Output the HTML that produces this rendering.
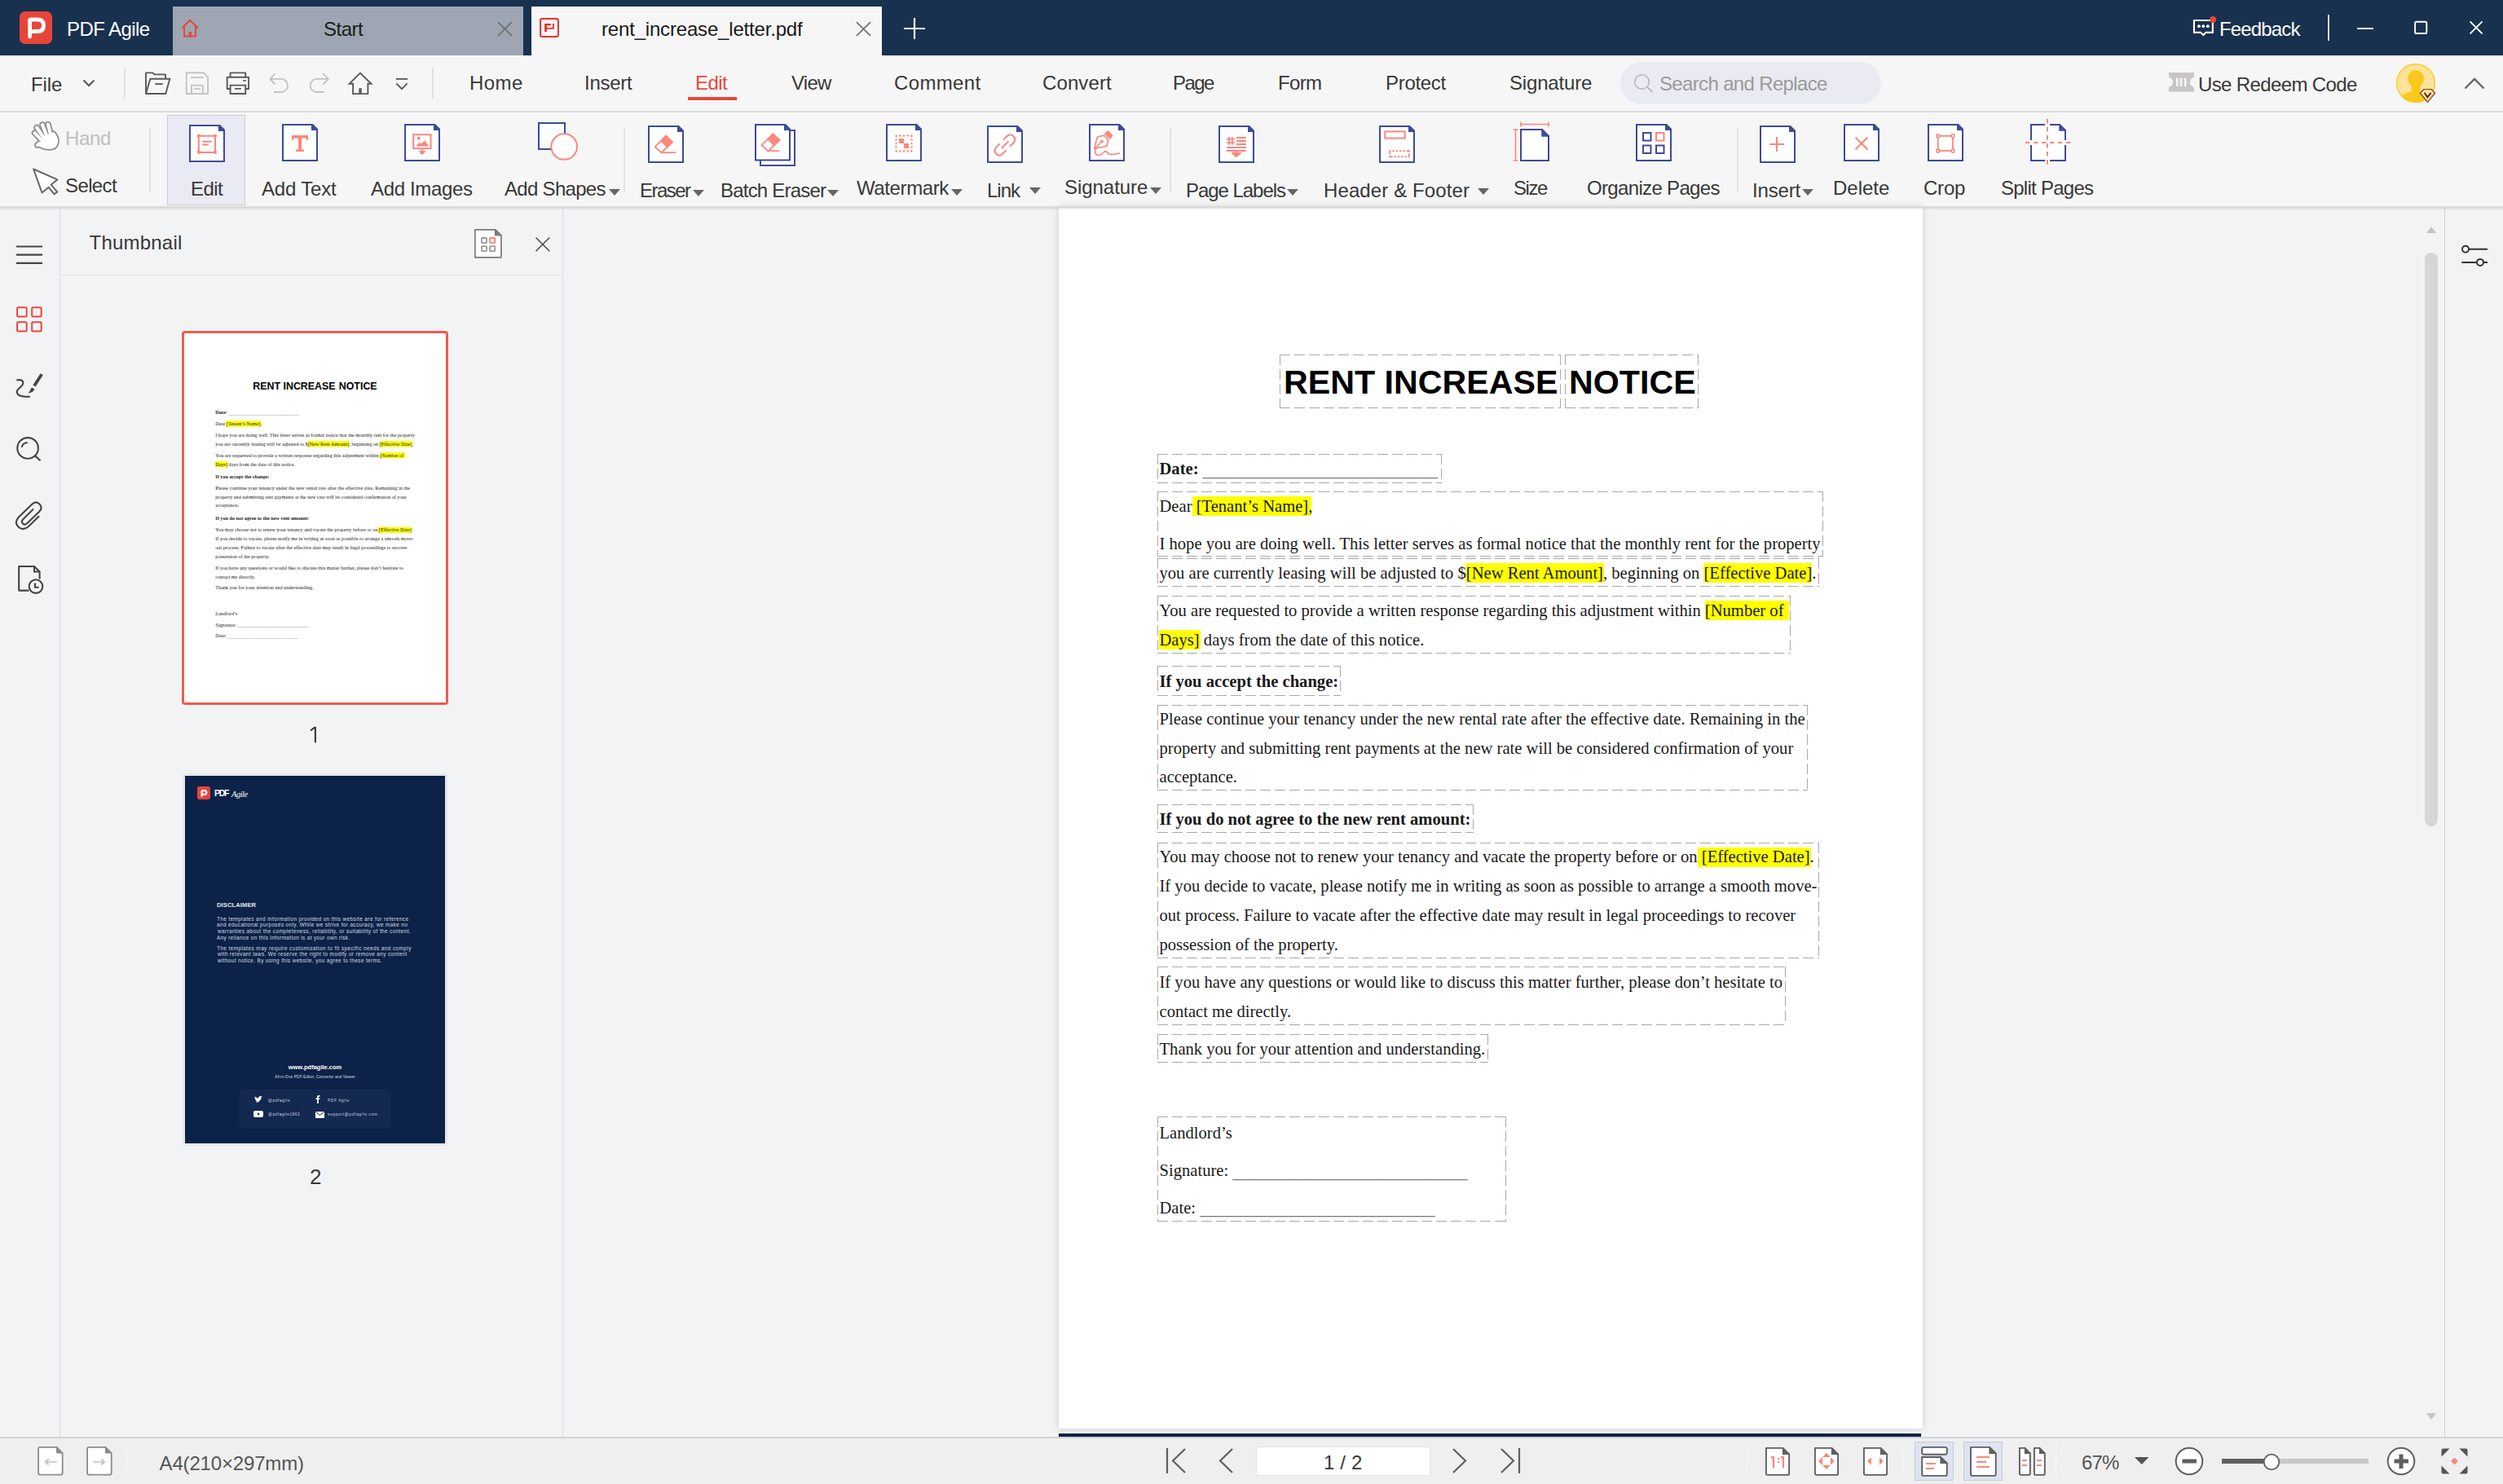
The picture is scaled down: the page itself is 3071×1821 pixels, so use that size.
<!DOCTYPE html><html><head><meta charset="utf-8"><style>
*{margin:0;padding:0}
html,body{width:3071px;height:1821px;overflow:hidden;background:#f2f3f5;font-family:'Liberation Sans',sans-serif}
.t{position:absolute;white-space:pre}
.db{position:absolute;background-image:repeating-linear-gradient(90deg,#a9a9a9 0 13px,transparent 13px 18px),repeating-linear-gradient(90deg,#a9a9a9 0 13px,transparent 13px 18px),repeating-linear-gradient(180deg,#a9a9a9 0 13px,transparent 13px 18px),repeating-linear-gradient(180deg,#a9a9a9 0 13px,transparent 13px 18px);background-size:100% 1px,100% 1px,1px 100%,1px 100%;background-position:0 0,0 100%,0 0,100% 0;background-repeat:no-repeat}
svg{overflow:visible}
</style></head><body><div style="position:absolute;left:0px;top:0px;width:3071px;height:68px;background:#18314f"></div><svg style="position:absolute;left:24px;top:14px;" width="40" height="40" viewBox="0 0 40 40"><rect x="0" y="0" width="40" height="40" rx="7" fill="#e8453a"/><path d="M10.3 31V11Q10.3 7.5 14 7.5H22Q32 7.5 32 17.25Q32 27 22 27H15.5Q15 27 15 27.5V31Q15 33.4 12.65 33.4Q10.3 33.4 10.3 31Z" fill="#fff"/><path d="M15 12.5H22Q27.2 12.5 27.2 17.25Q27.2 22 22 22H17.5Q15.8 22 15 23Z" fill="#e8453a"/></svg><div class="t" style="left:82.00px;top:24px;font-size:24px;line-height:24px;color:#ffffff;font-family:'Liberation Sans';font-weight:400;letter-spacing:-0.586px;">PDF Agile</div><div style="position:absolute;left:212px;top:8px;width:430px;height:60px;background:#9da6b2"></div><svg style="position:absolute;left:221px;top:23px;" width="24" height="23" viewBox="0 0 24 23"><path d="M2 11.5 L12 2 L22 11.5 M5 9 V21.5 H19 V9" fill="none" stroke="#e8453a" stroke-width="2"/><rect x="10.5" y="16" width="3.5" height="5.5" fill="#e8453a"/></svg><div class="t" style="left:397.00px;top:24px;font-size:24px;line-height:24px;color:#1a1a1a;font-family:'Liberation Sans';font-weight:400;letter-spacing:-0.504px;">Start</div><svg style="position:absolute;left:610px;top:26px;" width="19" height="18" viewBox="0 0 19 18"><path d="M1 1.2L18 17.8M18 1.2L1 17.8" stroke="#707070" stroke-width="1.7"/></svg><div style="position:absolute;left:652px;top:8px;width:430px;height:60px;background:#f6f6f6"></div><svg style="position:absolute;left:661px;top:22px;" width="26" height="26" viewBox="0 0 26 26"><rect x="2.1" y="1" width="21.8" height="21.9" rx="2" fill="none" stroke="#e5332a" stroke-width="2"/><path d="M7.1 7H14.9V9.2H9.9V11.9H16.9V7H18.8V13.75H9.9V16.9H7.1Z" fill="#e5332a"/></svg><div class="t" style="left:738.00px;top:24px;font-size:24px;line-height:24px;color:#1a1a1a;font-family:'Liberation Sans';font-weight:400;letter-spacing:-0.181px;">rent_increase_letter.pdf</div><svg style="position:absolute;left:1050px;top:26px;" width="19" height="18" viewBox="0 0 19 18"><path d="M1 1.2L18 17.8M18 1.2L1 17.8" stroke="#707070" stroke-width="1.7"/></svg><svg style="position:absolute;left:1108px;top:21px;" width="28" height="28" viewBox="0 0 28 28"><path d="M14 1V27M1 14H27" stroke="#fff" stroke-width="2.2"/></svg><svg style="position:absolute;left:2690px;top:22px;" width="30" height="24" viewBox="0 0 30 24"><path d="M1.95 3H24.85V17.85H16.5L13.3 21L10.1 17.85H1.95Z" fill="none" stroke="#fff" stroke-width="2.1"/><circle cx="7.9" cy="10.2" r="1.9" fill="#fff"/><circle cx="13.3" cy="10.2" r="1.9" fill="#fff"/><circle cx="18.8" cy="10.2" r="1.9" fill="#fff"/><circle cx="25.1" cy="2" r="3.9" fill="#e8453a"/></svg><div class="t" style="left:2723.00px;top:24px;font-size:24px;line-height:24px;color:#ffffff;font-family:'Liberation Sans';font-weight:400;letter-spacing:-0.843px;">Feedback</div><div style="position:absolute;left:2856px;top:18px;width:2px;height:32px;background:#d8d8d8"></div><div style="position:absolute;left:2892px;top:34px;width:20px;height:2px;background:#fff"></div><svg style="position:absolute;left:2961px;top:25px;" width="18" height="18" viewBox="0 0 18 18"><rect x="2.1" y="1.8" width="14.2" height="14.2" rx="1.6" fill="none" stroke="#fff" stroke-width="1.9"/></svg><svg style="position:absolute;left:3029px;top:25px;" width="18" height="18" viewBox="0 0 18 18"><path d="M1.6 1.4L16.6 16.4M16.6 1.4L1.6 16.4" stroke="#fff" stroke-width="1.9"/></svg><div style="position:absolute;left:0px;top:68px;width:3071px;height:69px;background:#f6f6f6"></div><div style="position:absolute;left:0px;top:136px;width:3071px;height:2px;background:#dadada"></div><div class="t" style="left:38.00px;top:92px;font-size:24px;line-height:24px;color:#383838;font-family:'Liberation Sans';font-weight:400;letter-spacing:-0.108px;">File</div><svg style="position:absolute;left:101px;top:97px;" width="16" height="10" viewBox="0 0 16 10"><path d="M1.5 1.5L8 8L14.5 1.5" fill="none" stroke="#555" stroke-width="2"/></svg><div style="position:absolute;left:152px;top:83px;width:2px;height:38px;background:#e0e0e0"></div><svg style="position:absolute;left:176px;top:88px;" width="34" height="30" viewBox="0 0 34 30"><path d="M3 27V1.4H11.4L13.8 3.4H27V8.5" fill="none" stroke="#595959" stroke-width="1.9" stroke-linejoin="round"/><path d="M3 27L8.4 8.8H32.3L27.3 27Z" fill="none" stroke="#595959" stroke-width="1.9" stroke-linejoin="round"/><path d="M14.4 15H23.7" stroke="#595959" stroke-width="1.9"/></svg><svg style="position:absolute;left:227px;top:88px;" width="30" height="30" viewBox="0 0 30 30"><path d="M1.7 1.2H22.7L28.1 6.6V27H1.7Z" fill="none" stroke="#c4c4c4" stroke-width="1.9" stroke-linejoin="round"/><path d="M7.1 7H22.7" stroke="#c4c4c4" stroke-width="1.9"/><path d="M8 27V16.6H21.8V27" fill="none" stroke="#c4c4c4" stroke-width="1.9"/><path d="M11.3 21H18.8" stroke="#c4c4c4" stroke-width="1.9"/></svg><svg style="position:absolute;left:277px;top:88px;" width="30" height="30" viewBox="0 0 30 30"><path d="M5.6 6.7V1.4H24.2V6.7" fill="none" stroke="#595959" stroke-width="1.9" stroke-linejoin="round"/><path d="M5.6 21H1.7V6.7H28.1V21H24.2" fill="none" stroke="#595959" stroke-width="1.9" stroke-linejoin="round"/><path d="M5.6 16.6H24.2V27H5.6Z" fill="none" stroke="#595959" stroke-width="1.9"/><path d="M21.2 10.9H24.8M11 20.9H18.8" stroke="#595959" stroke-width="1.9"/></svg><svg style="position:absolute;left:330px;top:89px;" width="26" height="26" viewBox="0 0 26 26"><path d="M7.5 1.3L1.4 7.9L7.5 14.5M1.4 7.9H15A8 8 0 0 1 15 24H6.1" fill="none" stroke="#c4c4c4" stroke-width="1.9"/></svg><svg style="position:absolute;left:379px;top:89px;" width="26" height="26" viewBox="0 0 26 26"><path d="M17.3 1.3L23.8 7.9L17.3 14.5M23.8 7.9H9.7A8 8 0 0 0 9.7 24H18.8" fill="none" stroke="#c4c4c4" stroke-width="1.9"/></svg><svg style="position:absolute;left:427px;top:88px;" width="32" height="30" viewBox="0 0 32 30"><path d="M14.9 1.6L1.6 14.8H6.1V27.1H24.4V14.8H28.5Z" fill="none" stroke="#595959" stroke-width="1.9" stroke-linejoin="miter"/><rect x="13.3" y="20.2" width="3.5" height="6.5" fill="#595959"/></svg><svg style="position:absolute;left:484px;top:95px;" width="17" height="18" viewBox="0 0 17 18"><path d="M1.9 1.9H16" stroke="#595959" stroke-width="1.9"/><path d="M2.3 7.4L9 14.2L15.6 7.4" fill="none" stroke="#595959" stroke-width="1.9"/></svg><div style="position:absolute;left:530px;top:83px;width:2px;height:38px;background:#e0e0e0"></div><div class="t" style="left:576.00px;top:90px;font-size:24px;line-height:24px;color:#383838;font-family:'Liberation Sans';font-weight:400;letter-spacing:0.443px;">Home</div><div class="t" style="left:717.00px;top:90px;font-size:24px;line-height:24px;color:#383838;font-family:'Liberation Sans';font-weight:400;letter-spacing:-0.271px;">Insert</div><div class="t" style="left:853.00px;top:90px;font-size:24px;line-height:24px;color:#e8483e;font-family:'Liberation Sans';font-weight:400;letter-spacing:-0.562px;">Edit</div><div class="t" style="left:971.00px;top:90px;font-size:24px;line-height:24px;color:#383838;font-family:'Liberation Sans';font-weight:400;letter-spacing:-0.751px;">View</div><div class="t" style="left:1097.00px;top:90px;font-size:24px;line-height:24px;color:#383838;font-family:'Liberation Sans';font-weight:400;letter-spacing:0.357px;">Comment</div><div class="t" style="left:1279.00px;top:90px;font-size:24px;line-height:24px;color:#383838;font-family:'Liberation Sans';font-weight:400;letter-spacing:0.105px;">Convert</div><div class="t" style="left:1439.00px;top:90px;font-size:24px;line-height:24px;color:#383838;font-family:'Liberation Sans';font-weight:400;letter-spacing:-1.568px;">Page</div><div class="t" style="left:1568.00px;top:90px;font-size:24px;line-height:24px;color:#383838;font-family:'Liberation Sans';font-weight:400;letter-spacing:-0.667px;">Form</div><div class="t" style="left:1700.00px;top:90px;font-size:24px;line-height:24px;color:#383838;font-family:'Liberation Sans';font-weight:400;letter-spacing:-0.311px;">Protect</div><div class="t" style="left:1852.00px;top:90px;font-size:24px;line-height:24px;color:#383838;font-family:'Liberation Sans';font-weight:400;letter-spacing:-0.174px;">Signature</div><div style="position:absolute;left:844px;top:119px;width:60px;height:4px;background:#e8483e"></div><div style="position:absolute;left:1988px;top:76px;width:320px;height:52px;background:#e9eaf2;border-radius:26px"></div><svg style="position:absolute;left:2004px;top:90px;" width="25" height="25" viewBox="0 0 25 25"><circle cx="10.5" cy="10.5" r="8.8" fill="none" stroke="#b9b5b5" stroke-width="1.6"/><path d="M17.3 17L23.4 23.1" stroke="#b9b5b5" stroke-width="1.7"/></svg><div class="t" style="left:2036.00px;top:91px;font-size:24px;line-height:24px;color:#9a9a9a;font-family:'Liberation Sans';font-weight:400;letter-spacing:-0.655px;">Search and Replace</div><svg style="position:absolute;left:2661px;top:89px;" width="31" height="24" viewBox="0 0 31 24"><path d="M0 0H31V5.5Q25.8 7.5 25.8 11.8Q25.8 16 31 18.2V23.6H0V18.2Q5.2 16 5.2 11.8Q5.2 7.5 0 5.5Z" fill="#c8c5c5"/><path d="M10.25 6.7V16.9M15.05 6.7V16.9M20.25 6.7V16.9" stroke="#f6f6f6" stroke-width="2.7"/></svg><div class="t" style="left:2697.00px;top:92px;font-size:24px;line-height:24px;color:#383838;font-family:'Liberation Sans';font-weight:400;letter-spacing:-0.626px;">Use Redeem Code</div><svg style="position:absolute;left:2938px;top:76px;" width="54" height="54" viewBox="0 0 54 54"><circle cx="26" cy="26" r="24" fill="#fde39a"/><circle cx="26" cy="26" r="23.3" fill="none" stroke="#f8cd2a" stroke-width="1.4"/><clipPath id="avc"><circle cx="26" cy="26" r="24"/></clipPath><g clip-path="url(#avc)"><ellipse cx="26" cy="20.5" rx="9.9" ry="10.5" fill="#f8c81c"/><path d="M6 52L9.5 40.8L20.7 35.8V28H31.4V35.8L45 41V52Z" fill="#f8c81c"/></g><path d="M35.8 33.6H45.2L49.6 38.2L40.4 49.4L31.4 38.2Z" fill="#fde39a" stroke="#8a4b22" stroke-width="1.4" stroke-linejoin="round"/><path d="M36.6 37.8L40.4 43.3L44.6 37.8" fill="none" stroke="#5a2418" stroke-width="1.9"/></svg><svg style="position:absolute;left:3023px;top:95px;" width="26" height="15" viewBox="0 0 26 15"><path d="M1.5 13.5L13 2L24.5 13.5" fill="none" stroke="#666" stroke-width="2.4"/></svg><div style="position:absolute;left:0px;top:138px;width:3071px;height:116px;background:#f6f6f6"></div><div style="position:absolute;left:0px;top:253px;width:3071px;height:2px;background:#dcdcdc"></div><svg style="position:absolute;left:38px;top:148px;" width="40" height="40" viewBox="0 0 40 40"><path d="M12 23L4.5 15" stroke="#8f8f8f" stroke-width="7.6" stroke-linecap="round"/><path d="M15 20L7 8.5" stroke="#8f8f8f" stroke-width="7.6" stroke-linecap="round"/><path d="M19 18L14 5" stroke="#8f8f8f" stroke-width="7.6" stroke-linecap="round"/><path d="M24 17L21 4.5" stroke="#8f8f8f" stroke-width="7.6" stroke-linecap="round"/><path d="M17 29L8 30" stroke="#8f8f8f" stroke-width="7.6" stroke-linecap="round"/><path d="M9 30.5Q6 31.5 6.5 29Q8 26 13 25L13 20L28 14Q34 20 33 27Q31 35 23 35Q15 35 9 30.5Z" fill="#8f8f8f" stroke="#8f8f8f" stroke-width="3.6" stroke-linejoin="round"/><path d="M12 23L4.5 15" stroke="#fff" stroke-width="4" stroke-linecap="round"/><path d="M15 20L7 8.5" stroke="#fff" stroke-width="4" stroke-linecap="round"/><path d="M19 18L14 5" stroke="#fff" stroke-width="4" stroke-linecap="round"/><path d="M24 17L21 4.5" stroke="#fff" stroke-width="4" stroke-linecap="round"/><path d="M17 29L8 30" stroke="#fff" stroke-width="4" stroke-linecap="round"/><path d="M9 30.5Q6 31.5 6.5 29Q8 26 13 25L13 20L28 14Q34 20 33 27Q31 35 23 35Q15 35 9 30.5Z" fill="#fff" stroke="#fff" stroke-width="0" /></svg><div class="t" style="left:80.00px;top:158px;font-size:24px;line-height:24px;color:#c0c0c0;font-family:'Liberation Sans';font-weight:400;letter-spacing:-0.342px;">Hand</div><svg style="position:absolute;left:39px;top:205px;" width="36" height="36" viewBox="0 0 36 36"><path d="M2.1 2.5L31.4 15.4L23.6 21.7L31.4 30.6L27.3 33.2L20.6 24.7L12.5 31.4Z" fill="#fff" stroke="#666" stroke-width="2" stroke-linejoin="round"/></svg><div class="t" style="left:80.00px;top:216px;font-size:24px;line-height:24px;color:#383838;font-family:'Liberation Sans';font-weight:400;letter-spacing:-0.607px;">Select</div><div style="position:absolute;left:183px;top:156px;width:2px;height:80px;background:#e3e3e3"></div><div style="position:absolute;left:205px;top:141px;width:96px;height:111px;background:#e9eaf3;border:1px solid #c9cdd8;box-sizing:border-box"></div><svg style="position:absolute;left:232px;top:153px;" width="44" height="46" viewBox="0 0 44 46"><path d="M1 1H37.5 L43 6.5 V45 H1Z" fill="#fff" stroke="#3f4b96" stroke-width="2" stroke-linejoin="miter"/><path d="M36 1H37.5L43 6.5V8H36Z" fill="#3f4b96"/><path d="M11.8 13.7H32M11.8 33.9H32M11.8 13.7V33.9M32 13.7V33.9" stroke="#fb877d" stroke-width="2" fill="none"/><rect x="10.0" y="11.899999999999999" width="3.6" height="3.6" fill="#fb877d"/><rect x="30.2" y="11.899999999999999" width="3.6" height="3.6" fill="#fb877d"/><rect x="10.0" y="32.1" width="3.6" height="3.6" fill="#fb877d"/><rect x="30.2" y="32.1" width="3.6" height="3.6" fill="#fb877d"/><path d="M16.3 20.7H28M16.3 24.6H23.6" stroke="#fb877d" stroke-width="2"/></svg><div class="t" style="left:234.00px;top:220px;font-size:24px;line-height:24px;color:#383838;font-family:'Liberation Sans';font-weight:400;letter-spacing:-0.562px;">Edit</div><svg style="position:absolute;left:346px;top:152px;" width="44" height="46" viewBox="0 0 44 46"><path d="M1 1H37.5 L43 6.5 V45 H1Z" fill="#fff" stroke="#3f4b96" stroke-width="2" stroke-linejoin="miter"/><path d="M36 1H37.5L43 6.5V8H36Z" fill="#3f4b96"/><path d="M12 14H32V20H30V17.5H24V31.5H27V34H17V31.5H20V17.5H14V20H12Z" fill="#fb877d"/></svg><div class="t" style="left:321.00px;top:220px;font-size:24px;line-height:24px;color:#383838;font-family:'Liberation Sans';font-weight:400;letter-spacing:-0.174px;">Add Text</div><svg style="position:absolute;left:496px;top:152px;" width="44" height="46" viewBox="0 0 44 46"><path d="M1 1H37.5 L43 6.5 V45 H1Z" fill="#fff" stroke="#3f4b96" stroke-width="2" stroke-linejoin="miter"/><path d="M36 1H37.5L43 6.5V8H36Z" fill="#3f4b96"/><rect x="11.2" y="13.2" width="21.3" height="17" fill="none" stroke="#fb877d" stroke-width="2"/><circle cx="17.7" cy="17.7" r="2" fill="#fb877d"/><path d="M14.2 27.6L18.7 22.7L20.5 24.5L25.6 20.3L29.9 27.6Z" fill="#fb877d"/><path d="M21 30.2H23V33.3H21Z M17 33.3H27L22 38Z" fill="#fb877d"/></svg><div class="t" style="left:455.00px;top:220px;font-size:24px;line-height:24px;color:#383838;font-family:'Liberation Sans';font-weight:400;letter-spacing:-0.342px;">Add Images</div><svg style="position:absolute;left:660px;top:150px;" width="52" height="50" viewBox="0 0 52 50"><rect x="1" y="1" width="32" height="32" fill="#fff" stroke="#3f4b96" stroke-width="2"/><circle cx="32.2" cy="30" r="15.8" fill="#fff" stroke="#fb877d" stroke-width="2"/></svg><div class="t" style="left:619.00px;top:220px;font-size:24px;line-height:24px;color:#383838;font-family:'Liberation Sans';font-weight:400;letter-spacing:-0.697px;">Add Shapes</div><svg style="position:absolute;left:747px;top:232px;" width="14" height="8" viewBox="0 0 14 8"><path d="M0 0H14L7.0 8Z" fill="#666"/></svg><div style="position:absolute;left:765px;top:157px;width:2px;height:79px;background:#e3e3e3"></div><svg style="position:absolute;left:795px;top:154px;" width="44" height="46" viewBox="0 0 44 46"><path d="M1 1H37.5 L43 6.5 V45 H1Z" fill="#fff" stroke="#3f4b96" stroke-width="2" stroke-linejoin="miter"/><path d="M36 1H37.5L43 6.5V8H36Z" fill="#3f4b96"/><path d="M8.7 26.2L22.1 12.6L30.2 20.5L16.6 33.2Z" fill="none" stroke="#fb877d" stroke-width="1.8" stroke-linejoin="miter"/><path d="M15.3 19.6L22.1 12.6L30.2 20.5L23.3 27Z" fill="#fb877d"/><path d="M16 33.2H34" stroke="#fb877d" stroke-width="1.8"/></svg><div class="t" style="left:785.00px;top:222px;font-size:24px;line-height:24px;color:#383838;font-family:'Liberation Sans';font-weight:400;letter-spacing:-1.539px;">Eraser</div><svg style="position:absolute;left:850px;top:233px;" width="14" height="8" viewBox="0 0 14 8"><path d="M0 0H14L7.0 8Z" fill="#666"/></svg><svg style="position:absolute;left:926px;top:152px;" width="51" height="53" viewBox="0 0 51 53"><path d="M7 44.5V51H49V8H43" fill="#fff" stroke="#3f4b96" stroke-width="2"/><path d="M1 1H37.5L43 6.5V44.5H1Z" fill="#fff" stroke="#3f4b96" stroke-width="2"/><path d="M36 1H37.5L43 6.5V8H36Z" fill="#3f4b96"/><path d="M8.6 26.1L22.3 12.2L30.6 20L16.4 33.4Z" fill="none" stroke="#fb877d" stroke-width="1.8"/><path d="M15.4 19.2L22.3 12.2L30.6 20L23.4 26.9Z" fill="#fb877d"/><path d="M16 33.2H30.2" stroke="#fb877d" stroke-width="1.8"/></svg><div class="t" style="left:884.00px;top:222px;font-size:24px;line-height:24px;color:#383838;font-family:'Liberation Sans';font-weight:400;letter-spacing:-0.794px;">Batch Eraser</div><svg style="position:absolute;left:1015px;top:233px;" width="14" height="8" viewBox="0 0 14 8"><path d="M0 0H14L7.0 8Z" fill="#666"/></svg><svg style="position:absolute;left:1087px;top:152px;" width="44" height="46" viewBox="0 0 44 46"><path d="M1 1H37.5 L43 6.5 V45 H1Z" fill="#fff" stroke="#3f4b96" stroke-width="2" stroke-linejoin="miter"/><path d="M36 1H37.5L43 6.5V8H36Z" fill="#3f4b96"/><path d="M11.5 14.5H32.5M31.5 13.5V34.5M32.5 33.5H11.5M12.5 34.5V13.5" fill="none" stroke="#fb877d" stroke-width="2" stroke-dasharray="2.4 2.25"/><rect x="16" y="18" width="6" height="6" fill="#fb877d"/><rect x="22" y="24" width="6" height="6" fill="#fb877d"/></svg><div class="t" style="left:1051.00px;top:219px;font-size:24px;line-height:24px;color:#383838;font-family:'Liberation Sans';font-weight:400;letter-spacing:-0.394px;">Watermark</div><svg style="position:absolute;left:1167px;top:232px;" width="14" height="8" viewBox="0 0 14 8"><path d="M0 0H14L7.0 8Z" fill="#666"/></svg><svg style="position:absolute;left:1211px;top:154px;" width="44" height="46" viewBox="0 0 44 46"><path d="M1 1H37.5 L43 6.5 V45 H1Z" fill="#fff" stroke="#3f4b96" stroke-width="2" stroke-linejoin="miter"/><path d="M36 1H37.5L43 6.5V8H36Z" fill="#3f4b96"/><path d="M19.9 17.6L24.3 13.2Q28.5 9.2 32.6 13.2Q36.5 17.4 32.3 21.5L27.8 25.9M15.6 22.3L11.3 26.6Q7.3 30.8 11.3 34.8Q15.4 38.8 19.5 34.4L23.5 30.2M17.7 28L26.4 19.4" fill="none" stroke="#fb877d" stroke-width="2"/></svg><div class="t" style="left:1211.00px;top:222px;font-size:24px;line-height:24px;color:#383838;font-family:'Liberation Sans';font-weight:400;letter-spacing:-1.009px;">Link</div><svg style="position:absolute;left:1263px;top:230px;" width="14" height="8" viewBox="0 0 14 8"><path d="M0 0H14L7.0 8Z" fill="#666"/></svg><svg style="position:absolute;left:1336px;top:152px;" width="44" height="46" viewBox="0 0 44 46"><path d="M1 1H37.5 L43 6.5 V45 H1Z" fill="#fff" stroke="#3f4b96" stroke-width="2" stroke-linejoin="miter"/><path d="M36 1H37.5L43 6.5V8H36Z" fill="#3f4b96"/><path d="M6.7 30.4L10.3 16L19.3 14.2L23.6 20.3L21.8 27.5Z" fill="none" stroke="#fb877d" stroke-width="1.7" stroke-linejoin="round"/><path d="M18.9 11.7L23.6 8.1L29.7 14.2L25.8 19.2Z" fill="#fb877d"/><path d="M8.5 29.3L15.7 21.8" stroke="#fb877d" stroke-width="1.5"/><circle cx="16" cy="21.6" r="1.9" fill="#fb877d"/><path d="M7.8 30.4Q6.5 38.5 11.7 38.5Q14.5 38.5 18.6 34.5Q20.5 32.8 22.5 35Q24.5 37.8 29 37.5L37.3 36.1" fill="none" stroke="#fb877d" stroke-width="1.7" stroke-linecap="round"/></svg><div class="t" style="left:1306.00px;top:218px;font-size:24px;line-height:24px;color:#383838;font-family:'Liberation Sans';font-weight:400;letter-spacing:-0.049px;">Signature</div><svg style="position:absolute;left:1411px;top:230px;" width="14" height="8" viewBox="0 0 14 8"><path d="M0 0H14L7.0 8Z" fill="#666"/></svg><div style="position:absolute;left:1435px;top:156px;width:2px;height:80px;background:#e3e3e3"></div><svg style="position:absolute;left:1495px;top:154px;" width="44" height="46" viewBox="0 0 44 46"><path d="M1 1H37.5 L43 6.5 V45 H1Z" fill="#fff" stroke="#3f4b96" stroke-width="2" stroke-linejoin="miter"/><path d="M36 1H37.5L43 6.5V8H36Z" fill="#3f4b96"/><path d="M13 14.1V23.7M17 14.1V23.7M10 16.7H20.1M10 21.2H20.1" stroke="#fb877d" stroke-width="1.7"/><path d="M22 15H33.9M22 19H33.9M22 23H33.9M10 27H33.9M10 31H33.9" stroke="#fb877d" stroke-width="1.8"/><path d="M21.9 31V34M16.5 33.6H27.4L21.9 38.3Z" fill="#fb877d" stroke="#fb877d" stroke-width="1.5" stroke-linejoin="round"/></svg><div class="t" style="left:1455.00px;top:222px;font-size:24px;line-height:24px;color:#383838;font-family:'Liberation Sans';font-weight:400;letter-spacing:-1.044px;">Page Labels</div><svg style="position:absolute;left:1579px;top:232px;" width="14" height="8" viewBox="0 0 14 8"><path d="M0 0H14L7.0 8Z" fill="#666"/></svg><svg style="position:absolute;left:1692px;top:154px;" width="44" height="46" viewBox="0 0 44 46"><path d="M1 1H37.5 L43 6.5 V45 H1Z" fill="#fff" stroke="#3f4b96" stroke-width="2" stroke-linejoin="miter"/><path d="M36 1H37.5L43 6.5V8H36Z" fill="#3f4b96"/><rect x="7.3" y="7.4" width="24.4" height="8.2" fill="none" stroke="#fb877d" stroke-width="2"/><path d="M12.2 31.3H37.9M36.9 30.3V39.3M37.9 38.3H12.2M13.2 39.3V30.3" fill="none" stroke="#fb877d" stroke-width="2" stroke-dasharray="2.3 2"/></svg><div class="t" style="left:1624.00px;top:222px;font-size:24px;line-height:24px;color:#383838;font-family:'Liberation Sans';font-weight:400;letter-spacing:0.112px;">Header &amp; Footer</div><svg style="position:absolute;left:1813px;top:231px;" width="14" height="8" viewBox="0 0 14 8"><path d="M0 0H14L7.0 8Z" fill="#666"/></svg><svg style="position:absolute;left:1856px;top:149px;" width="50" height="52" viewBox="0 0 50 52"><path d="M10 10H36L44 18V48H10Z" fill="#fff" stroke="#3f4b96" stroke-width="2"/><path d="M36 10L44 18H36Z" fill="#3f4b96" stroke="#3f4b96" stroke-width="1.5" stroke-linejoin="round"/><path d="M10 3.5H44M10 0.5V6.5M44 0.5V6.5" stroke="#fb877d" stroke-width="1.6"/><path d="M3.5 10V48M0.5 10H6.5M0.5 48H6.5" stroke="#fb877d" stroke-width="1.6"/></svg><div class="t" style="left:1857.00px;top:219px;font-size:24px;line-height:24px;color:#383838;font-family:'Liberation Sans';font-weight:400;letter-spacing:-1.447px;">Size</div><svg style="position:absolute;left:2007px;top:152px;" width="44" height="46" viewBox="0 0 44 46"><path d="M1 1H37.5 L43 6.5 V45 H1Z" fill="#fff" stroke="#3f4b96" stroke-width="2" stroke-linejoin="miter"/><path d="M36 1H37.5L43 6.5V8H36Z" fill="#3f4b96"/><rect x="9" y="11" width="9.5" height="9.5" fill="none" stroke="#3f4b96" stroke-width="2"/><rect x="25" y="11" width="9.5" height="9.5" fill="none" stroke="#fb877d" stroke-width="2"/><rect x="9" y="26.5" width="9.5" height="9.5" fill="none" stroke="#3f4b96" stroke-width="2"/><rect x="25" y="26.5" width="9.5" height="9.5" fill="none" stroke="#3f4b96" stroke-width="2"/></svg><div class="t" style="left:1947.00px;top:219px;font-size:24px;line-height:24px;color:#383838;font-family:'Liberation Sans';font-weight:400;letter-spacing:-0.662px;">Organize Pages</div><div style="position:absolute;left:2131px;top:156px;width:2px;height:80px;background:#e3e3e3"></div><svg style="position:absolute;left:2159px;top:154px;" width="44" height="46" viewBox="0 0 44 46"><path d="M1 1H37.5 L43 6.5 V45 H1Z" fill="#fff" stroke="#3f4b96" stroke-width="2" stroke-linejoin="miter"/><path d="M36 1H37.5L43 6.5V8H36Z" fill="#3f4b96"/><path d="M21 14V32M12 23H30" stroke="#fb877d" stroke-width="2"/></svg><div class="t" style="left:2150.00px;top:222px;font-size:24px;line-height:24px;color:#383838;font-family:'Liberation Sans';font-weight:400;letter-spacing:-0.171px;">Insert</div><svg style="position:absolute;left:2211px;top:232px;" width="14" height="8" viewBox="0 0 14 8"><path d="M0 0H14L7.0 8Z" fill="#666"/></svg><svg style="position:absolute;left:2262px;top:152px;" width="44" height="46" viewBox="0 0 44 46"><path d="M1 1H37.5 L43 6.5 V45 H1Z" fill="#fff" stroke="#3f4b96" stroke-width="2" stroke-linejoin="miter"/><path d="M36 1H37.5L43 6.5V8H36Z" fill="#3f4b96"/><path d="M14.5 16.5L29.5 31.5M29.5 16.5L14.5 31.5" stroke="#fb877d" stroke-width="2"/></svg><div class="t" style="left:2249.00px;top:219px;font-size:24px;line-height:24px;color:#383838;font-family:'Liberation Sans';font-weight:400;letter-spacing:-0.005px;">Delete</div><svg style="position:absolute;left:2365px;top:152px;" width="44" height="46" viewBox="0 0 44 46"><path d="M1 1H37.5 L43 6.5 V45 H1Z" fill="#fff" stroke="#3f4b96" stroke-width="2" stroke-linejoin="miter"/><path d="M36 1H37.5L43 6.5V8H36Z" fill="#3f4b96"/><rect x="12.8" y="14.8" width="18.2" height="18.3" fill="none" stroke="#fb877d" stroke-width="1.8"/><circle cx="12.8" cy="14.8" r="2" fill="#fff" stroke="#fb877d" stroke-width="1.6"/><circle cx="31" cy="14.8" r="2" fill="#fff" stroke="#fb877d" stroke-width="1.6"/><circle cx="12.8" cy="33.1" r="2" fill="#fff" stroke="#fb877d" stroke-width="1.6"/><circle cx="31" cy="33.1" r="2" fill="#fff" stroke="#fb877d" stroke-width="1.6"/></svg><div class="t" style="left:2360.00px;top:219px;font-size:24px;line-height:24px;color:#383838;font-family:'Liberation Sans';font-weight:400;letter-spacing:-0.224px;">Crop</div><svg style="position:absolute;left:2484px;top:145px;" width="58" height="58" viewBox="0 0 58 58"><path d="M8 8H43L50 15V52H8Z" fill="#fff" stroke="#3f4b96" stroke-width="2"/><path d="M43 8L50 15H43Z" fill="#3f4b96" stroke="#3f4b96" stroke-width="1.5" stroke-linejoin="round"/><rect x="25" y="5" width="6" height="6" fill="#fff"/><rect x="25" y="49" width="6" height="6" fill="#fff"/><rect x="5" y="27" width="6" height="6" fill="#fff"/><rect x="47" y="27" width="6" height="6" fill="#fff"/><path d="M28 1V57M1 30H57" stroke="#fb877d" stroke-width="2" stroke-dasharray="5.5 4.5"/></svg><div class="t" style="left:2455.00px;top:219px;font-size:24px;line-height:24px;color:#383838;font-family:'Liberation Sans';font-weight:400;letter-spacing:-0.741px;">Split Pages</div><div style="position:absolute;left:0px;top:255px;width:3071px;height:1509px;background:#f2f3f5"></div><div style="position:absolute;left:73px;top:255px;width:1px;height:1509px;background:#dcdde1"></div><svg style="position:absolute;left:18px;top:300px;" width="36" height="26" viewBox="0 0 36 26"><path d="M2 2.5H34M2 12.6H34M2 22.8H34" stroke="#444444" stroke-width="2.2"/></svg><svg style="position:absolute;left:18px;top:375px;" width="36" height="34" viewBox="0 0 36 34"><rect x="3.1" y="2.2" width="11.6" height="11.3" rx="1.2" fill="none" stroke="#e8483e" stroke-width="2"/><rect x="21.2" y="2.2" width="11.5" height="11.3" rx="1.2" fill="none" stroke="#e8483e" stroke-width="2"/><rect x="3.1" y="20.2" width="11.6" height="11.4" rx="1.2" fill="none" stroke="#e8483e" stroke-width="2"/><rect x="21.2" y="20.2" width="11.5" height="11.4" rx="1.2" fill="none" stroke="#e8483e" stroke-width="2"/></svg><svg style="position:absolute;left:18px;top:456px;" width="38" height="34" viewBox="0 0 38 34"><path d="M2.3 10.6Q9 9 10.3 13Q11 16 5.5 20.5Q1 24 4 28Q6.5 30.9 18.8 30.9" fill="none" stroke="#444444" stroke-width="2.1"/><path d="M33.2 3.2L24 17.5" stroke="#444444" stroke-width="3.8"/><path d="M21.2 19.6L24.2 21.5Q23.5 25.5 16.4 26.6Q19 24 19.5 21.5Z" fill="#444444"/></svg><svg style="position:absolute;left:18px;top:535px;" width="34" height="33" viewBox="0 0 34 33"><circle cx="16.1" cy="14.9" r="12.8" fill="none" stroke="#444444" stroke-width="2.1"/><path d="M25.3 24.6L31.6 30.2" stroke="#444444" stroke-width="2.1"/><path d="M8.7 13.9Q9.5 8.5 15.8 8" fill="none" stroke="#444444" stroke-width="2.1"/></svg><svg style="position:absolute;left:18px;top:614px;" width="36" height="36" viewBox="0 0 36 36"><path d="M30.1 19.3L17 32Q10 38 4.5 32.5Q-1 27 5 20.5L21 5Q26 0 30.5 4.5Q35 9 30 14L15.5 28Q12.5 31 10 28.5Q7.5 26 10.5 23L23 10.5" fill="none" stroke="#444444" stroke-width="2.1"/></svg><svg style="position:absolute;left:18px;top:692px;" width="40" height="40" viewBox="0 0 40 40"><path d="M17.5 32.6H5.2V3H24L30.6 9.6V18.5" fill="none" stroke="#444444" stroke-width="2.1" stroke-linejoin="round"/><path d="M24 3V9.6H30.6" fill="none" stroke="#444444" stroke-width="2"/><circle cx="26" cy="27.6" r="8.3" fill="none" stroke="#444444" stroke-width="2.1"/><path d="M25 23.6V28.7H29.7" fill="none" stroke="#444444" stroke-width="2.1"/></svg><div style="position:absolute;left:74px;top:337px;width:616px;height:1px;background:#e2e3e6"></div><div style="position:absolute;left:690px;top:255px;width:1px;height:1509px;background:#dcdde1"></div><div class="t" style="left:109.50px;top:286px;font-size:24px;line-height:24px;color:#383838;font-family:'Liberation Sans';font-weight:400;letter-spacing:0.222px;">Thumbnail</div><svg style="position:absolute;left:580px;top:279px;" width="38" height="40" viewBox="0 0 38 40"><path d="M2.85 2.85H28L34.95 9.8V36.85H2.85Z" fill="#fff" stroke="#7a7a7a" stroke-width="1.7" stroke-linejoin="round"/><path d="M27.5 2.85L34.95 9.8H27.5Z" fill="#7a7a7a" stroke="#7a7a7a" stroke-width="1.2"/><rect x="11" y="13" width="6.1" height="6.1" rx="0.8" fill="none" stroke="#999" stroke-width="1.8"/><rect x="21.1" y="13" width="6.1" height="6.1" rx="0.8" fill="none" stroke="#fa8079" stroke-width="1.8"/><rect x="11" y="23.1" width="6.1" height="6.1" rx="0.8" fill="none" stroke="#999" stroke-width="1.8"/><rect x="21.1" y="23.1" width="6.1" height="6.1" rx="0.8" fill="none" stroke="#999" stroke-width="1.8"/></svg><svg style="position:absolute;left:656px;top:290px;" width="20" height="20" viewBox="0 0 20 20"><path d="M1.5 1.5L18.3 18.3M18.3 1.5L1.5 18.3" stroke="#4a4a4a" stroke-width="1.5"/></svg><div style="position:absolute;left:1299px;top:254px;width:1060px;height:1499px;background:#fff;box-shadow:0 0 9px rgba(0,0,0,0.16)"></div><div style="position:absolute;left:1299px;top:254px;width:1060px;height:1499px;overflow:hidden"><div style="position:absolute;left:164px;top:355px;width:146px;height:24px;background:#ffff00"></div><div style="position:absolute;left:498.5px;top:437px;width:170.5px;height:24px;background:#ffff00"></div><div style="position:absolute;left:791px;top:437px;width:133px;height:24px;background:#ffff00"></div><div style="position:absolute;left:793px;top:483px;width:103px;height:24px;background:#ffff00"></div><div style="position:absolute;left:123px;top:519px;width:51px;height:24px;background:#ffff00"></div><div style="position:absolute;left:784px;top:786px;width:139px;height:24px;background:#ffff00"></div><div class="db" style="left:271px;top:180.5px;width:345px;height:66.5px"></div><div class="db" style="left:621px;top:180.5px;width:164px;height:66.5px"></div><div class="db" style="left:121px;top:302.5px;width:349px;height:36.0px"></div><div class="db" style="left:121px;top:348.5px;width:817px;height:80.5px"></div><div class="db" style="left:121px;top:431px;width:811.5px;height:34.5px"></div><div class="db" style="left:121px;top:476.5px;width:776.5px;height:71.0px"></div><div class="db" style="left:121px;top:563px;width:225px;height:37px"></div><div class="db" style="left:121px;top:610.5px;width:798px;height:105.5px"></div><div class="db" style="left:121px;top:733px;width:388px;height:35px"></div><div class="db" style="left:121px;top:779.5px;width:811.5px;height:142.5px"></div><div class="db" style="left:121px;top:932px;width:770.5px;height:71.5px"></div><div class="db" style="left:121px;top:1014.5px;width:406px;height:35.0px"></div><div class="db" style="left:121px;top:1116px;width:428px;height:128.5px"></div><div class="t" style="left:276px;top:194.68px;font-size:41.2px;line-height:41.2px;color:#000;font-family:'Liberation Sans';font-weight:700">RENT INCREASE</div><div class="t" style="left:626px;top:194.68px;font-size:41.2px;line-height:41.2px;color:#000;font-family:'Liberation Sans';font-weight:700">NOTICE</div><div class="t" style="left:123.5px;top:311.34px;font-size:20.6px;line-height:20.6px;color:#1a1a1a;font-family:'Liberation Serif';font-weight:400"><b>Date:</b> <span style="color:#7a7a7a;position:relative;top:1.5px">____________________________</span></div><div class="t" style="left:123.5px;top:356.84px;font-size:20.6px;line-height:20.6px;color:#1a1a1a;font-family:'Liberation Serif';font-weight:400">Dear [Tenant’s Name],</div><div class="t" style="left:123.5px;top:402.84px;font-size:20.6px;line-height:20.6px;color:#1a1a1a;font-family:'Liberation Serif';font-weight:400">I hope you are doing well. This letter serves as formal notice that the monthly rent for the property</div><div class="t" style="left:123.5px;top:438.84px;font-size:20.6px;line-height:20.6px;color:#1a1a1a;font-family:'Liberation Serif';font-weight:400">you are currently leasing will be adjusted to $[New Rent Amount], beginning on [Effective Date].</div><div class="t" style="left:123.5px;top:484.84px;font-size:20.6px;line-height:20.6px;color:#1a1a1a;font-family:'Liberation Serif';font-weight:400">You are requested to provide a written response regarding this adjustment within [Number of</div><div class="t" style="left:123.5px;top:520.84px;font-size:20.6px;line-height:20.6px;color:#1a1a1a;font-family:'Liberation Serif';font-weight:400">Days] days from the date of this notice.</div><div class="t" style="left:123.5px;top:571.84px;font-size:20.6px;line-height:20.6px;color:#1a1a1a;font-family:'Liberation Serif';font-weight:700">If you accept the change:</div><div class="t" style="left:123.5px;top:618.34px;font-size:20.6px;line-height:20.6px;color:#1a1a1a;font-family:'Liberation Serif';font-weight:400">Please continue your tenancy under the new rental rate after the effective date. Remaining in the</div><div class="t" style="left:123.5px;top:653.84px;font-size:20.6px;line-height:20.6px;color:#1a1a1a;font-family:'Liberation Serif';font-weight:400">property and submitting rent payments at the new rate will be considered confirmation of your</div><div class="t" style="left:123.5px;top:689.34px;font-size:20.6px;line-height:20.6px;color:#1a1a1a;font-family:'Liberation Serif';font-weight:400">acceptance.</div><div class="t" style="left:123.5px;top:740.84px;font-size:20.6px;line-height:20.6px;color:#1a1a1a;font-family:'Liberation Serif';font-weight:700">If you do not agree to the new rent amount:</div><div class="t" style="left:123.5px;top:787.34px;font-size:20.6px;line-height:20.6px;color:#1a1a1a;font-family:'Liberation Serif';font-weight:400">You may choose not to renew your tenancy and vacate the property before or on [Effective Date].</div><div class="t" style="left:123.5px;top:823.34px;font-size:20.6px;line-height:20.6px;color:#1a1a1a;font-family:'Liberation Serif';font-weight:400">If you decide to vacate, please notify me in writing as soon as possible to arrange a smooth move-</div><div class="t" style="left:123.5px;top:858.84px;font-size:20.6px;line-height:20.6px;color:#1a1a1a;font-family:'Liberation Serif';font-weight:400">out process. Failure to vacate after the effective date may result in legal proceedings to recover</div><div class="t" style="left:123.5px;top:894.84px;font-size:20.6px;line-height:20.6px;color:#1a1a1a;font-family:'Liberation Serif';font-weight:400">possession of the property.</div><div class="t" style="left:123.5px;top:940.84px;font-size:20.6px;line-height:20.6px;color:#1a1a1a;font-family:'Liberation Serif';font-weight:400">If you have any questions or would like to discuss this matter further, please don’t hesitate to</div><div class="t" style="left:123.5px;top:976.84px;font-size:20.6px;line-height:20.6px;color:#1a1a1a;font-family:'Liberation Serif';font-weight:400">contact me directly.</div><div class="t" style="left:123.5px;top:1022.84px;font-size:20.6px;line-height:20.6px;color:#1a1a1a;font-family:'Liberation Serif';font-weight:400">Thank you for your attention and understanding.</div><div class="t" style="left:123.5px;top:1125.84px;font-size:20.6px;line-height:20.6px;color:#1a1a1a;font-family:'Liberation Serif';font-weight:400">Landlord’s</div><div class="t" style="left:123.5px;top:1172.34px;font-size:20.6px;line-height:20.6px;color:#1a1a1a;font-family:'Liberation Serif';font-weight:400">Signature: <span style="color:#7a7a7a;position:relative;top:1.5px">____________________________</span></div><div class="t" style="left:123.5px;top:1217.84px;font-size:20.6px;line-height:20.6px;color:#1a1a1a;font-family:'Liberation Serif';font-weight:400">Date: <span style="color:#7a7a7a;position:relative;top:1.5px">____________________________</span></div></div><div style="position:absolute;left:1299px;top:1759px;width:1058px;height:5px;background:#0c2248"></div><div style="position:absolute;left:223px;top:406px;width:327px;height:459px;border:3px solid #ef5b51;border-radius:4px;box-sizing:border-box;background:#fff"></div><div style="position:absolute;left:226px;top:409px;width:321px;height:453px;overflow:hidden;background:#fff"><div style="position:absolute;left:0.6px;top:-0.5px;width:1060px;height:1499px;transform:scale(0.3015,0.3024);transform-origin:0 0"><div style="position:absolute;left:164px;top:355px;width:146px;height:24px;background:#ffff00"></div><div style="position:absolute;left:498.5px;top:437px;width:170.5px;height:24px;background:#ffff00"></div><div style="position:absolute;left:791px;top:437px;width:133px;height:24px;background:#ffff00"></div><div style="position:absolute;left:793px;top:483px;width:103px;height:24px;background:#ffff00"></div><div style="position:absolute;left:123px;top:519px;width:51px;height:24px;background:#ffff00"></div><div style="position:absolute;left:784px;top:786px;width:139px;height:24px;background:#ffff00"></div><div class="t" style="left:276px;top:194.68px;font-size:41.2px;line-height:41.2px;color:#000;font-family:'Liberation Sans';font-weight:700">RENT INCREASE</div><div class="t" style="left:626px;top:194.68px;font-size:41.2px;line-height:41.2px;color:#000;font-family:'Liberation Sans';font-weight:700">NOTICE</div><div class="t" style="left:123.5px;top:311.34px;font-size:20.6px;line-height:20.6px;color:#1a1a1a;font-family:'Liberation Serif';font-weight:400"><b>Date:</b> <span style="color:#7a7a7a;position:relative;top:1.5px">____________________________</span></div><div class="t" style="left:123.5px;top:356.84px;font-size:20.6px;line-height:20.6px;color:#1a1a1a;font-family:'Liberation Serif';font-weight:400">Dear [Tenant’s Name],</div><div class="t" style="left:123.5px;top:402.84px;font-size:20.6px;line-height:20.6px;color:#1a1a1a;font-family:'Liberation Serif';font-weight:400">I hope you are doing well. This letter serves as formal notice that the monthly rent for the property</div><div class="t" style="left:123.5px;top:438.84px;font-size:20.6px;line-height:20.6px;color:#1a1a1a;font-family:'Liberation Serif';font-weight:400">you are currently leasing will be adjusted to $[New Rent Amount], beginning on [Effective Date].</div><div class="t" style="left:123.5px;top:484.84px;font-size:20.6px;line-height:20.6px;color:#1a1a1a;font-family:'Liberation Serif';font-weight:400">You are requested to provide a written response regarding this adjustment within [Number of</div><div class="t" style="left:123.5px;top:520.84px;font-size:20.6px;line-height:20.6px;color:#1a1a1a;font-family:'Liberation Serif';font-weight:400">Days] days from the date of this notice.</div><div class="t" style="left:123.5px;top:571.84px;font-size:20.6px;line-height:20.6px;color:#1a1a1a;font-family:'Liberation Serif';font-weight:700">If you accept the change:</div><div class="t" style="left:123.5px;top:618.34px;font-size:20.6px;line-height:20.6px;color:#1a1a1a;font-family:'Liberation Serif';font-weight:400">Please continue your tenancy under the new rental rate after the effective date. Remaining in the</div><div class="t" style="left:123.5px;top:653.84px;font-size:20.6px;line-height:20.6px;color:#1a1a1a;font-family:'Liberation Serif';font-weight:400">property and submitting rent payments at the new rate will be considered confirmation of your</div><div class="t" style="left:123.5px;top:689.34px;font-size:20.6px;line-height:20.6px;color:#1a1a1a;font-family:'Liberation Serif';font-weight:400">acceptance.</div><div class="t" style="left:123.5px;top:740.84px;font-size:20.6px;line-height:20.6px;color:#1a1a1a;font-family:'Liberation Serif';font-weight:700">If you do not agree to the new rent amount:</div><div class="t" style="left:123.5px;top:787.34px;font-size:20.6px;line-height:20.6px;color:#1a1a1a;font-family:'Liberation Serif';font-weight:400">You may choose not to renew your tenancy and vacate the property before or on [Effective Date].</div><div class="t" style="left:123.5px;top:823.34px;font-size:20.6px;line-height:20.6px;color:#1a1a1a;font-family:'Liberation Serif';font-weight:400">If you decide to vacate, please notify me in writing as soon as possible to arrange a smooth move-</div><div class="t" style="left:123.5px;top:858.84px;font-size:20.6px;line-height:20.6px;color:#1a1a1a;font-family:'Liberation Serif';font-weight:400">out process. Failure to vacate after the effective date may result in legal proceedings to recover</div><div class="t" style="left:123.5px;top:894.84px;font-size:20.6px;line-height:20.6px;color:#1a1a1a;font-family:'Liberation Serif';font-weight:400">possession of the property.</div><div class="t" style="left:123.5px;top:940.84px;font-size:20.6px;line-height:20.6px;color:#1a1a1a;font-family:'Liberation Serif';font-weight:400">If you have any questions or would like to discuss this matter further, please don’t hesitate to</div><div class="t" style="left:123.5px;top:976.84px;font-size:20.6px;line-height:20.6px;color:#1a1a1a;font-family:'Liberation Serif';font-weight:400">contact me directly.</div><div class="t" style="left:123.5px;top:1022.84px;font-size:20.6px;line-height:20.6px;color:#1a1a1a;font-family:'Liberation Serif';font-weight:400">Thank you for your attention and understanding.</div><div class="t" style="left:123.5px;top:1125.84px;font-size:20.6px;line-height:20.6px;color:#1a1a1a;font-family:'Liberation Serif';font-weight:400">Landlord’s</div><div class="t" style="left:123.5px;top:1172.34px;font-size:20.6px;line-height:20.6px;color:#1a1a1a;font-family:'Liberation Serif';font-weight:400">Signature: <span style="color:#7a7a7a;position:relative;top:1.5px">____________________________</span></div><div class="t" style="left:123.5px;top:1217.84px;font-size:20.6px;line-height:20.6px;color:#1a1a1a;font-family:'Liberation Serif';font-weight:400">Date: <span style="color:#7a7a7a;position:relative;top:1.5px">____________________________</span></div></div></div><svg style="position:absolute;left:379px;top:890px;" width="12" height="23" viewBox="0 0 12 23"><path d="M7.9 2V21.2M2 6.5L7.9 2" fill="none" stroke="#383838" stroke-width="2.1"/></svg><div style="position:absolute;left:224px;top:949px;width:325px;height:457px;background:#e7e8eb;border-radius:2px"></div><div style="position:absolute;left:227px;top:952px;width:319px;height:451px;background:#0c2248"></div><svg style="position:absolute;left:242px;top:965px;" width="16" height="16" viewBox="0 0 16 16"><rect width="16" height="16" rx="3" fill="#e8453a"/><path d="M4.5 13V6Q4.5 4 6.5 4H8.5Q12.5 4 12.5 7.5Q12.5 11 8.5 11H6.5V13Z" fill="#fff"/><path d="M6.8 6.2H8.5Q10.3 6.2 10.3 7.5Q10.3 8.8 8.5 8.8H6.8Z" fill="#e8453a"/></svg><div class="t" style="left:263.00px;top:968px;font-size:10.5px;line-height:10.5px;color:#fff;font-family:'Liberation Sans';font-weight:700;letter-spacing:-1.293px;">PDF</div><div class="t" style="left:284px;top:969px;font-size:10.5px;line-height:10.5px;color:#fff;font-family:'Liberation Sans';font-weight:400;letter-spacing:-0.5px"><i style="font-family:'Liberation Serif';font-weight:400">Agile</i></div><div class="t" style="left:266.00px;top:1107px;font-size:7.6px;line-height:7.6px;color:#e6e8ee;font-family:'Liberation Sans';font-weight:700;letter-spacing:0.093px;">DISCLAIMER</div><div class="t" style="left:266.00px;top:1124.5px;font-size:6.4px;line-height:6.4px;color:#d5d9e2;font-family:'Liberation Sans';font-weight:400;letter-spacing:0.417px;">The templates and information provided on this website are for reference</div><div class="t" style="left:266.00px;top:1132.4px;font-size:6.4px;line-height:6.4px;color:#d5d9e2;font-family:'Liberation Sans';font-weight:400;letter-spacing:0.386px;">and educational purposes only. While we strive for accuracy, we make no</div><div class="t" style="left:267.00px;top:1140.3px;font-size:6.4px;line-height:6.4px;color:#d5d9e2;font-family:'Liberation Sans';font-weight:400;letter-spacing:0.389px;">warranties about the completeness, reliability, or suitability of the content.</div><div class="t" style="left:266.00px;top:1148.2px;font-size:6.4px;line-height:6.4px;color:#d5d9e2;font-family:'Liberation Sans';font-weight:400;letter-spacing:0.372px;">Any reliance on this information is at your own risk.</div><div class="t" style="left:266.00px;top:1160.5px;font-size:6.4px;line-height:6.4px;color:#d5d9e2;font-family:'Liberation Sans';font-weight:400;letter-spacing:0.436px;">The templates may require customization to fit specific needs and comply</div><div class="t" style="left:267.00px;top:1168.4px;font-size:6.4px;line-height:6.4px;color:#d5d9e2;font-family:'Liberation Sans';font-weight:400;letter-spacing:0.392px;">with relevant laws. We reserve the right to modify or remove any content</div><div class="t" style="left:267.00px;top:1176.3px;font-size:6.4px;line-height:6.4px;color:#d5d9e2;font-family:'Liberation Sans';font-weight:400;letter-spacing:0.369px;">without notice. By using this website, you agree to these terms.</div><div class="t" style="left:227px;top:1306px;width:319px;text-align:center;font-size:7.5px;line-height:8px;color:#fff;font-weight:700">www.pdfagile.com</div><div class="t" style="left:227px;top:1318px;width:319px;text-align:center;font-size:5px;line-height:6px;color:#d0d4de">All-in-One PDF Editor, Converter and Viewer</div><div style="position:absolute;left:293px;top:1337px;width:186px;height:48px;background:#13294f;border-radius:6px"></div><svg style="position:absolute;left:312px;top:1345px;" width="10" height="9" viewBox="0 0 10 9"><path d="M0.3 7.3Q3.3 8.5 6 6.5Q8.7 4.4 8.7 1.5L10 0.6L9 0.8L9.6 0L8.5 0.4Q7.3 -0.6 5.9 0.4Q4.9 1.3 5.3 2.5Q2.6 2.4 0.7 0.5Q-0.1 2.5 1.7 3.8L0.9 3.6Q1 5.1 2.6 5.6L1.9 5.7Q2.4 6.7 3.8 6.8Q2.2 7.7 0.3 7.3Z" fill="#fff"/></svg><div class="t" style="left:329.00px;top:1349px;font-size:4.8px;line-height:4.8px;color:#c8cde0;font-family:'Liberation Sans';font-weight:400;letter-spacing:0.624px;">@pdfagile</div><svg style="position:absolute;left:387px;top:1344px;" width="6" height="10" viewBox="0 0 6 10"><path d="M2 10V5H0.5V3.5H2V2Q2 0 4 0H5.5V1.7H4.5Q3.8 1.7 3.8 2.4V3.5H5.5L5.2 5H3.8V10Z" fill="#fff"/></svg><div class="t" style="left:402.00px;top:1349px;font-size:4.8px;line-height:4.8px;color:#c8cde0;font-family:'Liberation Sans';font-weight:400;letter-spacing:0.634px;">PDF Agile</div><svg style="position:absolute;left:311px;top:1363px;" width="12" height="8" viewBox="0 0 12 8"><rect width="12" height="8" rx="2" fill="#fff"/><path d="M5 2.3V5.7L8 4Z" fill="#13294f"/></svg><div class="t" style="left:329.00px;top:1366px;font-size:4.8px;line-height:4.8px;color:#c8cde0;font-family:'Liberation Sans';font-weight:400;letter-spacing:0.527px;">@pdfagile1863</div><svg style="position:absolute;left:387px;top:1364px;" width="11" height="8" viewBox="0 0 11 8"><rect width="11" height="8" fill="#fff"/><path d="M0.5 0.5L5.5 4.5L10.5 0.5" fill="none" stroke="#13294f" stroke-width="1"/></svg><div class="t" style="left:402.00px;top:1366px;font-size:4.8px;line-height:4.8px;color:#c8cde0;font-family:'Liberation Sans';font-weight:400;letter-spacing:0.680px;">support@pdfagile.com</div><div class="t" style="left:380px;top:1431px;font-size:26px;line-height:26px;color:#383838;font-family:'Liberation Sans';font-weight:400;">2</div><div style="position:absolute;left:0px;top:253px;width:3071px;height:2px;background:#d9d9d9"></div><div style="position:absolute;left:0px;top:255px;width:3071px;height:3px;background:linear-gradient(rgba(0,0,0,0.10),rgba(0,0,0,0))"></div><svg style="position:absolute;left:2977px;top:278px;" width="12" height="8" viewBox="0 0 12 8"><path d="M0 8H12L6 0Z" fill="#c8c5c5"/></svg><div style="position:absolute;left:2975px;top:310px;width:16px;height:704px;background:#d6d6d6;border-radius:8px"></div><svg style="position:absolute;left:2977px;top:1734px;" width="12" height="8" viewBox="0 0 12 8"><path d="M0 0H12L6 8Z" fill="#c8c5c5"/></svg><div style="position:absolute;left:2999px;top:255px;width:1px;height:1509px;background:#d0d0d4"></div><svg style="position:absolute;left:3018px;top:300px;" width="36" height="30" viewBox="0 0 36 30"><path d="M11 5.8H34M2.3 21.9H20.5M29 21.9H34" stroke="#333" stroke-width="2"/><circle cx="7" cy="5.8" r="4" fill="#f2f3f5" stroke="#333" stroke-width="2"/><circle cx="25" cy="21.9" r="4" fill="#f2f3f5" stroke="#333" stroke-width="2"/></svg><div style="position:absolute;left:0px;top:1764px;width:3071px;height:57px;background:#efefef"></div><div style="position:absolute;left:0px;top:1763px;width:3071px;height:2px;background:#d2d2d2"></div><svg style="position:absolute;left:45px;top:1774px;" width="34" height="38" viewBox="0 0 34 38"><path d="M2.1 3.8Q2.1 1.8 4.1 1.8H24.5L31.7 9V33.6Q31.7 35.6 29.7 35.6H4.1Q2.1 35.6 2.1 33.6Z" fill="#fff" stroke="#8f8a8c" stroke-width="1.8"/><path d="M24.5 1.8V9H31.7Z" fill="#8f8a8c" stroke="#8f8a8c" stroke-width="1"/><path d="M9 19.9L14.7 15V24.8Z" fill="#c8c8c8"/><path d="M14.7 19.9H24.8" stroke="#c8c8c8" stroke-width="1.6"/></svg><svg style="position:absolute;left:105px;top:1774px;" width="34" height="38" viewBox="0 0 34 38"><path d="M2.1 3.8Q2.1 1.8 4.1 1.8H24.5L31.7 9V33.6Q31.7 35.6 29.7 35.6H4.1Q2.1 35.6 2.1 33.6Z" fill="#fff" stroke="#8f8a8c" stroke-width="1.8"/><path d="M24.5 1.8V9H31.7Z" fill="#8f8a8c" stroke="#8f8a8c" stroke-width="1"/><path d="M24.5 19.9L19.4 15V24.8Z" fill="#c8c8c8"/><path d="M9.2 19.9H19.4" stroke="#c8c8c8" stroke-width="1.6"/></svg><div style="position:absolute;left:156px;top:1775px;width:1px;height:36px;background:repeating-linear-gradient(180deg,#ffffff 0 2px,transparent 2px 4px)"></div><div class="t" style="left:195.60px;top:1784px;font-size:24px;line-height:24px;color:#555;font-family:'Liberation Sans';font-weight:400;letter-spacing:-0.169px;">A4(210×297mm)</div><svg style="position:absolute;left:1430px;top:1776px;" width="27" height="34" viewBox="0 0 27 34"><path d="M2 1V32" stroke="#5f5f5f" stroke-width="2.2"/><path d="M24 2L9 16.5L24 31" fill="none" stroke="#5f5f5f" stroke-width="2.2"/></svg><svg style="position:absolute;left:1494px;top:1776px;" width="20" height="34" viewBox="0 0 20 34"><path d="M18 2L3 16.5L18 31" fill="none" stroke="#5f5f5f" stroke-width="2.2"/></svg><div style="position:absolute;left:1541px;top:1775px;width:214px;height:36px;background:#fff;border:1px solid #e4e4e4;box-sizing:border-box"></div><div class="t" style="left:1624.00px;top:1783px;font-size:24px;line-height:24px;color:#383838;font-family:'Liberation Sans';font-weight:400;letter-spacing:0.162px;">1 / 2</div><svg style="position:absolute;left:1781px;top:1776px;" width="20" height="34" viewBox="0 0 20 34"><path d="M2 2L17 16.5L2 31" fill="none" stroke="#5f5f5f" stroke-width="2.2"/></svg><svg style="position:absolute;left:1839px;top:1776px;" width="27" height="34" viewBox="0 0 27 34"><path d="M25 1V32" stroke="#5f5f5f" stroke-width="2.2"/><path d="M3 2L18 16.5L3 31" fill="none" stroke="#5f5f5f" stroke-width="2.2"/></svg><div style="position:absolute;left:2143px;top:1775px;width:1px;height:36px;background:repeating-linear-gradient(180deg,#ffffff 0 2px,transparent 2px 4px)"></div><div style="position:absolute;left:2335px;top:1775px;width:1px;height:36px;background:repeating-linear-gradient(180deg,#ffffff 0 2px,transparent 2px 4px)"></div><div style="position:absolute;left:2522px;top:1775px;width:1px;height:36px;background:repeating-linear-gradient(180deg,#ffffff 0 2px,transparent 2px 4px)"></div><svg style="position:absolute;left:2165px;top:1774px;" width="32" height="38" viewBox="0 0 32 38"><path d="M1.9 2.9H22.5L30.1 10.4V33.9Q30.1 35.9 28.1 35.9H3.9Q1.9 35.9 1.9 33.9Z" fill="#fff" stroke="#5f5f5f" stroke-width="1.9" stroke-linejoin="round"/><path d="M22.5 2.9L30.1 10.4H22.5Z" fill="#5f5f5f" stroke="#5f5f5f" stroke-width="1.2" stroke-linejoin="round"/><path d="M7.8 13H12.1V27.2H9.8V15.2H7.8Z" fill="#fb877d"/><rect x="15.8" y="15.1" width="2.3" height="2.1" fill="#fb877d"/><rect x="15.8" y="19.1" width="2.3" height="2.1" fill="#fb877d"/><path d="M19.9 13H24.1V27.2H21.9V15.2H19.9Z" fill="#fb877d"/></svg><svg style="position:absolute;left:2225px;top:1774px;" width="32" height="38" viewBox="0 0 32 38"><path d="M1.9 2.9H22.5L30.1 10.4V33.9Q30.1 35.9 28.1 35.9H3.9Q1.9 35.9 1.9 33.9Z" fill="#fff" stroke="#5f5f5f" stroke-width="1.9" stroke-linejoin="round"/><path d="M22.5 2.9L30.1 10.4H22.5Z" fill="#5f5f5f" stroke="#5f5f5f" stroke-width="1.2" stroke-linejoin="round"/><path d="M15.9 9.1L25.8 19L15.9 28.9L6 19Z M11 14V24H21V14Z" fill="#fb877d" fill-rule="evenodd"/></svg><svg style="position:absolute;left:2285px;top:1774px;" width="32" height="38" viewBox="0 0 32 38"><path d="M1.9 2.9H22.5L30.1 10.4V33.9Q30.1 35.9 28.1 35.9H3.9Q1.9 35.9 1.9 33.9Z" fill="#fff" stroke="#5f5f5f" stroke-width="1.9" stroke-linejoin="round"/><path d="M22.5 2.9L30.1 10.4H22.5Z" fill="#5f5f5f" stroke="#5f5f5f" stroke-width="1.2" stroke-linejoin="round"/><path d="M6 19L10.9 14.2V23.8Z" fill="#fb877d"/><path d="M25.9 19L21 14.2V23.8Z" fill="#fb877d"/></svg><div style="position:absolute;left:2349px;top:1769px;width:48px;height:48px;background:#dde3f0;border:1.5px solid #c9ccd6;box-sizing:border-box"></div><div style="position:absolute;left:2409px;top:1769px;width:48px;height:48px;background:#dde3f0;border:1.5px solid #c9ccd6;box-sizing:border-box"></div><svg style="position:absolute;left:2349px;top:1769px;" width="48" height="48" viewBox="0 0 48 48"><rect x="9.2" y="6.9" width="30.6" height="8.9" rx="2.2" fill="#fff" stroke="#5f5f5f" stroke-width="1.9"/><path d="M9.2 19H32L39.8 26.5V39.9Q39.8 41.9 37.8 41.9H11.2Q9.2 41.9 9.2 39.9Z" fill="#fff" stroke="#5f5f5f" stroke-width="1.9" stroke-linejoin="round"/><path d="M32 19L39.8 26.5H32Z" fill="#5f5f5f" stroke="#5f5f5f" stroke-width="1.2"/><path d="M14 27H26M14 33H24" stroke="#fb877d" stroke-width="2"/></svg><svg style="position:absolute;left:2409px;top:1769px;" width="48" height="48" viewBox="0 0 48 48"><path d="M9 6.9H32L39.7 14.4V39.9Q39.7 41.9 37.7 41.9H11Q9 41.9 9 39.9Z" fill="#fff" stroke="#5f5f5f" stroke-width="1.9" stroke-linejoin="round"/><path d="M32 6.9L39.7 14.4H32Z" fill="#5f5f5f" stroke="#5f5f5f" stroke-width="1.2"/><path d="M16 19H32M16 25H28M16 31H32" stroke="#fb877d" stroke-width="2"/></svg><svg style="position:absolute;left:2476px;top:1774px;" width="34" height="38" viewBox="0 0 34 38"><path d="M1.9 2.9H8.5L14.8 9.4V33.9Q14.8 35.9 12.8 35.9H3.9Q1.9 35.9 1.9 33.9Z" fill="#fff" stroke="#5f5f5f" stroke-width="1.9" stroke-linejoin="round"/><path d="M8.5 2.9L14.8 9.4H8.5Z" fill="#5f5f5f" stroke="#5f5f5f" stroke-width="1.2"/><path d="M19.9 2.9H26.5L32.8 9.4V33.9Q32.8 35.9 30.8 35.9H21.9Q19.9 35.9 19.9 33.9Z" fill="#fff" stroke="#5f5f5f" stroke-width="1.9" stroke-linejoin="round"/><path d="M26.5 2.9L32.8 9.4H26.5Z" fill="#5f5f5f" stroke="#5f5f5f" stroke-width="1.2"/><path d="M5 18H11M5 24H11M23 18H29M23 24H29" stroke="#fb877d" stroke-width="2"/></svg><div class="t" style="left:2554.00px;top:1783px;font-size:24px;line-height:24px;color:#555;font-family:'Liberation Sans';font-weight:400;letter-spacing:-0.848px;">67%</div><svg style="position:absolute;left:2618.5px;top:1788px;" width="17.5" height="9" viewBox="0 0 17.5 9"><path d="M0 0H17.5L8.75 9Z" fill="#555"/></svg><svg style="position:absolute;left:2668px;top:1775px;" width="36" height="36" viewBox="0 0 36 36"><circle cx="18" cy="18" r="16.3" fill="#fff" stroke="#5f5f5f" stroke-width="2"/><path d="M9.5 18H27" stroke="#5f5f5f" stroke-width="5"/></svg><div style="position:absolute;left:2726px;top:1790px;width:180px;height:6px;background:#c8c8c8"></div><div style="position:absolute;left:2726px;top:1790px;width:61px;height:6px;background:#5f5f5f"></div><svg style="position:absolute;left:2776px;top:1783px;" width="22" height="22" viewBox="0 0 22 22"><circle cx="11" cy="11" r="9.3" fill="#fff" stroke="#5f5f5f" stroke-width="1.8"/></svg><svg style="position:absolute;left:2928px;top:1775px;" width="36" height="36" viewBox="0 0 36 36"><circle cx="18" cy="18" r="16.3" fill="#fff" stroke="#5f5f5f" stroke-width="2"/><path d="M9.5 18H27M18 9.5V27" stroke="#5f5f5f" stroke-width="5"/></svg><svg style="position:absolute;left:2995px;top:1777px;" width="34" height="33" viewBox="0 0 34 33"><path d="M0.5 2.5Q0.5 0.5 2.5 0.5H10.5L0.5 10.5Z M32.5 2.5Q32.5 0.5 30.5 0.5H22.5L32.5 10.5Z M0.5 29.5Q0.5 31.5 2.5 31.5H10.5L0.5 21.5Z M32.5 29.5Q32.5 31.5 30.5 31.5H22.5L32.5 21.5Z" fill="#555"/><path d="M16.5 11.5L21 16L16.5 20.5L12 16Z" fill="#fb877d"/></svg></body></html>
